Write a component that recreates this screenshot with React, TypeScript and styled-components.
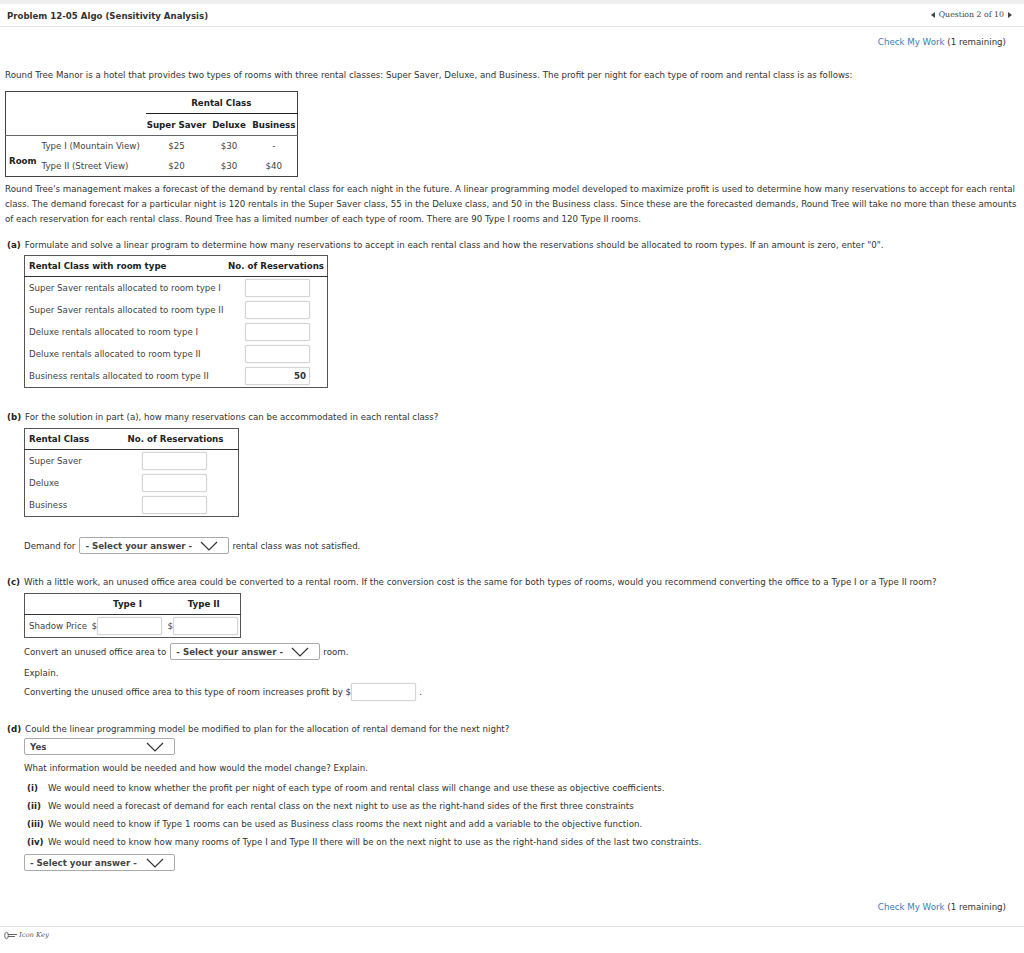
import * as React from "react";
import styled, { createGlobalStyle } from "styled-components";

const GlobalStyle = createGlobalStyle`
  html, body {
    margin: 0;
    padding: 0;
    background: #fff;
    font-family: "DejaVu Sans", Verdana, sans-serif;
    font-size: 8.66px;
    color: #333;
  }
`;

const Page = styled.div`
  width: 1024px;
  height: 953px;
  display: flex;
  flex-direction: column;
  overflow: hidden;
`;

const TopStrip = styled.div`
  height: 4px;
  flex: none;
  background: #efefef;
`;

const Header = styled.header`
  height: 22px;
  flex: none;
  display: flex;
  align-items: center;
  justify-content: space-between;
  padding: 0 12px 0 7px;
  border-bottom: 1px solid #e3e3e3;
`;

const Title = styled.h1`
  margin: 2px 0 0;
  font-size: 8.6px;
  font-weight: 700;
  color: #333;
`;

const Pager = styled.div`
  display: flex;
  align-items: center;
  gap: 4px;
  font-family: "DejaVu Serif", serif;
  font-size: 7.8px;
  color: #444;
  margin-top: -1px;
`;

const CheckRow = styled.div`
  flex: none;
  display: flex;
  justify-content: flex-end;
  padding-right: 18px;
  height: 11px;
  line-height: 11px;
  margin-top: 10px;
`;

const CheckLink = styled.a`
  color: #3b7bb8;
`;

const Body = styled.main`
  flex: 1;
  padding: 0 5px;
`;

const Para = styled.p<{ $top?: number }>`
  margin: ${(p) => p.$top ?? 0}px 0 0;
  line-height: 15px;
  white-space: nowrap;
`;

const ProfitTable = styled.table`
  margin-top: 8px;
  border: 1px solid #444;
  border-collapse: collapse;
  width: 292px;
  table-layout: fixed;
`;

const ProfitHead = styled.th<{ $rule?: boolean }>`
  height: 21px;
  padding: 0;
  text-align: center;
  font-weight: 700;
  color: #222;
  white-space: nowrap;
  border-bottom: ${(p) => (p.$rule ? "1px solid #222" : "none")};
`;

const ProfitCell = styled.td<{ $left?: boolean }>`
  height: 20px;
  padding: 0;
  text-align: ${(p) => (p.$left ? "left" : "center")};
  color: #444;
`;

const RoomCell = styled.td`
  padding: 9px 0 0 3px;
  font-weight: 700;
  color: #222;
`;

const HeadRow = styled.tr`
  border-bottom: 1px solid #666;
`;

const Question = styled.div<{ $top: number }>`
  margin-top: ${(p) => p.$top}px;
  display: flex;
  align-items: center;
  height: 14px;
  padding-left: 2px;
  gap: 4px;
  white-space: nowrap;
`;

const Letter = styled.b`
  color: #222;
`;

const Indent = styled.div`
  margin-left: 19px;
`;

const AnswerTable = styled.table<{ $width: number; $top?: number; $fixed?: boolean }>`
  border: 1px solid #555;
  border-collapse: collapse;
  width: ${(p) => p.$width}px;
  margin: ${(p) => p.$top ?? 3}px 0 0;
  table-layout: ${(p) => (p.$fixed ? "fixed" : "auto")};
`;

const AnswerHead = styled.th<{ $align?: string; $end?: number }>`
  height: 20px;
  padding: 0 ${(p) => p.$end ?? 0}px 0 4px;
  text-align: ${(p) => p.$align ?? "left"};
  font-weight: 700;
  color: #222;
  white-space: nowrap;
  border-bottom: 1px solid #333;
`;

const AnswerCell = styled.td<{ $center?: boolean; $inset?: number }>`
  height: 22px;
  padding: 0 0 0 ${(p) => p.$inset ?? 4}px;
  white-space: nowrap;
  text-align: ${(p) => (p.$center ? "center" : "left")};
  color: #444;
`;

const NumberBox = styled.input.attrs({ type: "text", readOnly: true })`
  box-sizing: border-box;
  width: 65px;
  height: 18px;
  display: inline-block;
  vertical-align: middle;
  padding: 0 3px;
  margin: 0;
  border: 1px solid #d5d5d5;
  border-radius: 2px;
  box-shadow: 0 0 1px #bbb;
  outline: none;
  background: #fff;
  text-align: right;
  font: 700 8.66px "DejaVu Sans", sans-serif;
  color: #333;
`;

const Line = styled.div<{ $top: number }>`
  margin-top: ${(p) => p.$top}px;
  display: flex;
  align-items: center;
  white-space: nowrap;
  min-height: 12px;
  gap: 3px;
`;

const Lead = styled.span`
  padding-right: 1px;
`;

const SelectBox = styled.div<{ $width: number }>`
  box-sizing: border-box;
  width: ${(p) => p.$width}px;
  height: 17px;
  flex: none;
  display: flex;
  align-items: center;
  justify-content: space-between;
  padding: 0 10px 0 5px;
  border: 1px solid #aaa;
  border-radius: 2px;
  font-weight: 700;
  color: #444;
`;

const Chevron = styled.svg`
  width: 18px;
  height: 10px;
  fill: none;
  stroke: #333;
  stroke-width: 1.2;
`;

const Roman = styled.div`
  display: grid;
  grid-template-columns: 21px 1fr;
  margin: 8px 0 0 3px;
  row-gap: 6px;
  line-height: 12px;
  white-space: nowrap;
`;

const RomanKey = styled.b`
  color: #222;
`;

const Footer = styled.footer`
  flex: none;
  height: 27px;
  box-sizing: border-box;
  border-top: 1px solid #e3e3e3;
  display: flex;
  align-items: flex-start;
  gap: 2px;
  padding: 4px 0 0 4px;
  margin-top: 13px;
`;

const KeyLabel = styled.span`
  font-family: "DejaVu Serif", serif;
  font-style: italic;
  font-size: 6.8px;
  color: #555;
`;

const Triangle = styled.span<{ $right?: boolean }>`
  width: 0;
  height: 0;
  border-top: 3px solid transparent;
  border-bottom: 3px solid transparent;
  ${(p) => (p.$right ? "border-left: 4px solid #444;" : "border-right: 4px solid #444;")}
`;

const Select: React.FC<{ width: number; label: string }> = ({ width, label }) => (
  <SelectBox $width={width}>
    <span>{label}</span>
    <Chevron viewBox="0 0 18 10">
      <path d="M1 1l8 8 8-8" />
    </Chevron>
  </SelectBox>
);

const allocations = [
  "Super Saver rentals allocated to room type I",
  "Super Saver rentals allocated to room type II",
  "Deluxe rentals allocated to room type I",
  "Deluxe rentals allocated to room type II",
  "Business rentals allocated to room type II",
];

const App: React.FC = () => {
  return (
    <Page>
      <GlobalStyle />
      <TopStrip />
      <Header>
        <Title>Problem 12-05 Algo (Sensitivity Analysis)</Title>
        <Pager>
          <Triangle />
          Question 2 of 10
          <Triangle $right />
        </Pager>
      </Header>
      <CheckRow>
        <span>
          <CheckLink>Check My Work</CheckLink> (1 remaining)
        </span>
      </CheckRow>
      <Body>
        <Para $top={20}>
          Round Tree Manor is a hotel that provides two types of rooms with three rental classes: Super Saver, Deluxe,
          and Business. The profit per night for each type of room and rental class is as follows:
        </Para>
        <ProfitTable>
          <colgroup>
            <col width="36" />
            <col width="104" />
            <col width="62" />
            <col width="43" />
            <col width="47" />
          </colgroup>
          <tbody>
            <tr>
              <ProfitHead colSpan={2} />
              <ProfitHead colSpan={3} $rule>
                Rental Class
              </ProfitHead>
            </tr>
            <HeadRow>
              <ProfitHead colSpan={2} />
              <ProfitHead>Super Saver</ProfitHead>
              <ProfitHead>Deluxe</ProfitHead>
              <ProfitHead>Business</ProfitHead>
            </HeadRow>
            <tr>
              <RoomCell rowSpan={2}>Room</RoomCell>
              <ProfitCell $left>Type I (Mountain View)</ProfitCell>
              <ProfitCell>$25</ProfitCell>
              <ProfitCell>$30</ProfitCell>
              <ProfitCell>-</ProfitCell>
            </tr>
            <tr>
              <ProfitCell $left>Type II (Street View)</ProfitCell>
              <ProfitCell>$20</ProfitCell>
              <ProfitCell>$30</ProfitCell>
              <ProfitCell>$40</ProfitCell>
            </tr>
          </tbody>
        </ProfitTable>
        <Para $top={5}>
          Round Tree's management makes a forecast of the demand by rental class for each night in the future. A linear
          programming model developed to maximize profit is used to determine how many reservations to accept for each
          rental
          <br />
          class. The demand forecast for a particular night is 120 rentals in the Super Saver class, 55 in the Deluxe
          class, and 50 in the Business class. Since these are the forecasted demands, Round Tree will take no more than
          these amounts
          <br />
          of each reservation for each rental class. Round Tree has a limited number of each type of room. There are 90
          Type I rooms and 120 Type II rooms.
        </Para>

        <Question $top={11}>
          <Letter>(a)</Letter>
          Formulate and solve a linear program to determine how many reservations to accept in each rental class and how
          the reservations should be allocated to room types. If an amount is zero, enter "0".
        </Question>
        <Indent>
          <AnswerTable $width={304}>
            <tbody>
              <tr>
                <AnswerHead>Rental Class with room type</AnswerHead>
                <AnswerHead $align="right" $end={3}>
                  No. of Reservations
                </AnswerHead>
              </tr>
              {allocations.map((text, i) => (
                <tr key={text}>
                  <AnswerCell>{text}</AnswerCell>
                  <AnswerCell $center>
                    <NumberBox defaultValue={i === 4 ? "50" : ""} />
                  </AnswerCell>
                </tr>
              ))}
            </tbody>
          </AnswerTable>
        </Indent>

        <Question $top={22}>
          <Letter>(b)</Letter>
          For the solution in part (a), how many reservations can be accommodated in each rental class?
        </Question>
        <Indent>
          <AnswerTable $width={214} $top={4} $fixed>
            <colgroup>
              <col width="99" />
              <col width="115" />
            </colgroup>
            <tbody>
              <tr>
                <AnswerHead>Rental Class</AnswerHead>
                <AnswerHead>No. of Reservations</AnswerHead>
              </tr>
              {["Super Saver", "Deluxe", "Business"].map((text) => (
                <tr key={text}>
                  <AnswerCell>{text}</AnswerCell>
                  <AnswerCell $inset={18}>
                    <NumberBox />
                  </AnswerCell>
                </tr>
              ))}
            </tbody>
          </AnswerTable>
          <Line $top={20}>
            <Lead>Demand for</Lead>
            <Select width={150} label="- Select your answer -" /> rental class was not satisfied.
          </Line>
        </Indent>

        <Question $top={21}>
          <Letter>(c)</Letter>
          With a little work, an unused office area could be converted to a rental room. If the conversion cost is the
          same for both types of rooms, would you recommend converting the office to a Type I or a Type II room?
        </Question>
        <Indent>
          <AnswerTable $width={216} $top={4} $fixed>
            <colgroup>
              <col width="63" />
              <col width="76" />
              <col width="77" />
            </colgroup>
            <tbody>
              <tr>
                <AnswerHead />
                <AnswerHead $align="center">Type I</AnswerHead>
                <AnswerHead $align="center">Type II</AnswerHead>
              </tr>
              <tr>
                <AnswerCell>Shadow Price</AnswerCell>
                <AnswerCell>
                  $<NumberBox />
                </AnswerCell>
                <AnswerCell>
                  $<NumberBox />
                </AnswerCell>
              </tr>
            </tbody>
          </AnswerTable>
          <Line $top={5}>
            <Lead>Convert an unused office area to</Lead>
            <Select width={150} label="- Select your answer -" /> room.
          </Line>
          <Line $top={7}>Explain.</Line>
          <Line $top={4}>
            <span>
              Converting the unused office area to this type of room increases profit by $<NumberBox />
            </span>
            .
          </Line>
        </Indent>

        <Question $top={21}>
          <Letter>(d)</Letter>
          Could the linear programming model be modified to plan for the allocation of rental demand for the next night?
        </Question>
        <Indent>
          <Line $top={2}>
            <Select width={151} label="Yes" />
          </Line>
          <Line $top={7}>What information would be needed and how would the model change? Explain.</Line>
          <Roman>
            <RomanKey>(i)</RomanKey>
            <span>
              We would need to know whether the profit per night of each type of room and rental class will change and
              use these as objective coefficients.
            </span>
            <RomanKey>(ii)</RomanKey>
            <span>
              We would need a forecast of demand for each rental class on the next night to use as the right-hand sides
              of the first three constraints
            </span>
            <RomanKey>(iii)</RomanKey>
            <span>
              We would need to know if Type 1 rooms can be used as Business class rooms the next night and add a
              variable to the objective function.
            </span>
            <RomanKey>(iv)</RomanKey>
            <span>
              We would need to know how many rooms of Type I and Type II there will be on the next night to use as the
              right-hand sides of the last two constraints.
            </span>
          </Roman>
          <Line $top={6}>
            <Select width={151} label="- Select your answer -" />
          </Line>
        </Indent>
      </Body>
      <CheckRow>
        <span>
          <CheckLink>Check My Work</CheckLink> (1 remaining)
        </span>
      </CheckRow>
      <Footer>
        <svg width="13" height="9" viewBox="0 0 13 9" fill="none" stroke="#666" strokeWidth="1">
          <ellipse cx="2.5" cy="4.5" rx="1.8" ry="3.2" />
          <path d="M4 3.5h9M4 5.5h7" />
        </svg>
        <KeyLabel>Icon Key</KeyLabel>
      </Footer>
    </Page>
  );
};

export default App;
